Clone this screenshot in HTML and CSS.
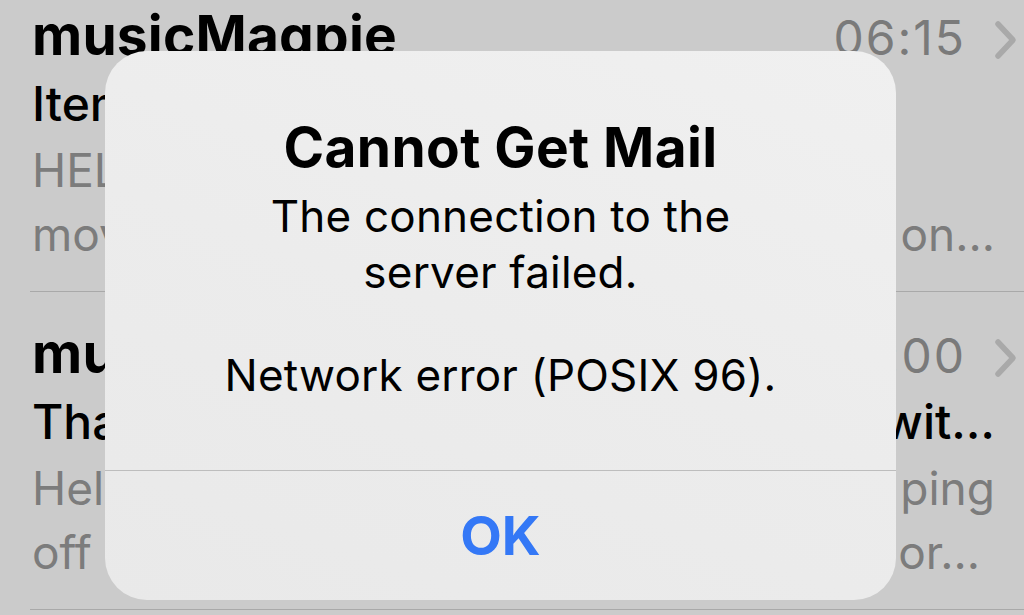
FILE: index.html
```html
<!DOCTYPE html>
<html lang="en">
<head>
<meta charset="utf-8">
<title>Cannot Get Mail</title>
<link rel="stylesheet" href="styles.css">
</head>
<body>
<div class="screen">
  <div class="list">
    <div class="row">
      <div class="line head">
        <span class="sender">musicMagpie</span>
        <span class="meta"><span class="time">06:15</span>
          <svg class="chev" viewBox="0 0 24 40" width="24" height="40"><path d="M4 4 L19 20 L4 36" fill="none" stroke="#a9a9a9" stroke-width="5.5" stroke-linecap="round" stroke-linejoin="round"/></svg>
        </span>
      </div>
      <div class="line subject"><span>Item</span><span></span></div>
      <div class="line preview"><span>HELLO</span><span></span></div>
      <div class="line preview"><span>moving</span><span>on…</span></div>
    </div>
    <div class="row">
      <div class="line head">
        <span class="sender">music</span>
        <span class="meta"><span class="time">05:00</span>
          <svg class="chev" viewBox="0 0 24 40" width="24" height="40"><path d="M4 4 L19 20 L4 36" fill="none" stroke="#a9a9a9" stroke-width="5.5" stroke-linecap="round" stroke-linejoin="round"/></svg>
        </span>
      </div>
      <div class="line subject"><span>Thanks</span><span>wit…</span></div>
      <div class="line preview"><span>Hello</span><span>ping</span></div>
      <div class="line preview"><span>off</span><span class="trail">or…</span></div>
    </div>
  </div>

  <div class="alert" role="alertdialog">
    <div class="alert-body">
      <h1 class="alert-title">Cannot Get Mail</h1>
      <p class="alert-msg">The connection to the<br>server failed.</p>
      <p class="alert-msg second">Network error (POSIX 96).</p>
    </div>
    <div class="alert-actions">
      <button class="alert-btn">OK</button>
    </div>
  </div>
</div>
</body>
</html>
```
FILE: styles.css
```css
html, body {
  margin: 0;
  padding: 0;
  width: 1024px;
  height: 615px;
  overflow: hidden;
  background: #cbcbcb;
  font-family: Inter, "Noto Sans", "Liberation Sans", sans-serif;
}

.screen {
  position: relative;
  width: 1024px;
  height: 615px;
  overflow: hidden;
}

.list {
  margin-top: -26px;
  padding-left: 30px;
}

.row {
  padding: 26px 0 25px 2px;
  border-bottom: 1px solid #a9a9a9;
}

.line {
  display: flex;
  justify-content: space-between;
  align-items: baseline;
  white-space: nowrap;
  padding-right: 29px;
}

.head {
  height: 70px;
  line-height: 70px;
  padding-right: 6px;
}

.sender {
  font-size: 55px;
  font-weight: 700;
  color: #000;
  letter-spacing: 0.2px;
}

.meta {
  display: flex;
  align-items: center;
  gap: 28px;
}

.time {
  font-size: 48px;
  color: #7a7a7a;
  font-weight: 400;
  letter-spacing: 2px;
}

.chev {
  display: block;
  margin-top: 4px;
}

.subject {
  height: 68px;
  line-height: 68px;
  font-size: 48px;
  font-weight: 500;
  color: #000;
}

.preview {
  height: 64px;
  line-height: 64px;
  font-size: 46px;
  color: #7c7c7c;
}

.trail {
  margin-right: 15px;
}

.alert {
  position: absolute;
  left: 105px;
  top: 51px;
  width: 791px;
  height: 549px;
  border-radius: 42px;
  background: linear-gradient(200deg, #f0f0f0 0%, #ececec 50%, #e9e9e9 100%);
  display: flex;
  flex-direction: column;
  overflow: hidden;
}

.alert-body {
  padding: 63px 40px 0;
  height: 420px;
  box-sizing: border-box;
  text-align: center;
  border-bottom: 1px solid #bdbdbd;
}

.alert-title {
  margin: 0 0 8px;
  font-size: 55px;
  line-height: 66px;
  font-weight: 700;
  color: #000;
  letter-spacing: 0.4px;
}

.alert-msg {
  margin: 0;
  font-size: 44px;
  line-height: 56px;
  font-weight: 400;
  color: #000;
  letter-spacing: 0.2px;
}

.alert-msg.second {
  margin-top: 47px;
}

.alert-actions {
  flex: 1;
  display: flex;
}

.alert-btn {
  flex: 1;
  border: 0;
  background: transparent;
  font-family: inherit;
  font-size: 54px;
  font-weight: 700;
  color: #3478f6;
  line-height: 128px;
  padding: 0;
}
```
